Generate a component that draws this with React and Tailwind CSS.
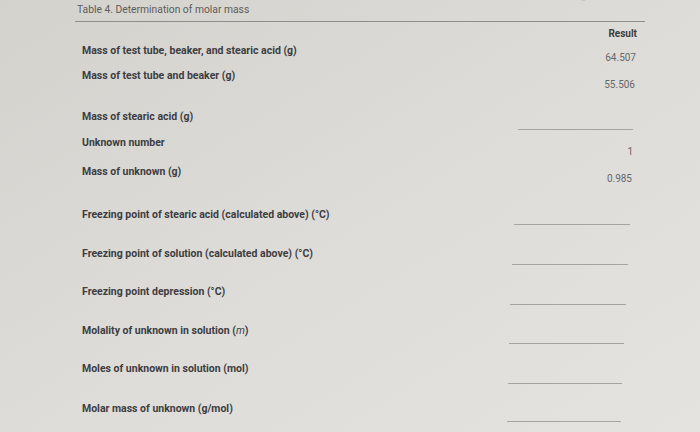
import React from "react";

const rows = [
  {
    label: "Mass of test tube, beaker, and stearic acid (g)",
    row: "h-[26px]",
    lab: "pt-[3px]",
    right: "pt-[10px] pr-[9px]",
    value: "64.507",
  },
  {
    label: "Mass of test tube and beaker (g)",
    row: "h-[40px]",
    lab: "pt-[2px]",
    right: "pt-[11px] pr-[10px]",
    value: "55.506",
  },
  {
    label: "Mass of stearic acid (g)",
    row: "h-[28px]",
    lab: "pt-[3px]",
    right: "mr-[12px] w-[115px] h-[22px]",
  },
  {
    label: "Unknown number",
    row: "h-[28px]",
    lab: "pt-[1px]",
    right: "pt-[10px] pr-[12px]",
    value: "1",
  },
  {
    label: "Mass of unknown (g)",
    row: "h-[42px]",
    lab: "pt-[2px]",
    right: "pt-[9px] pr-[13px]",
    value: "0.985",
  },
  {
    label: "Freezing point of stearic acid (calculated above) (°C)",
    row: "h-[39px]",
    lab: "pt-[3px]",
    right: "mr-[15px] w-[116px] h-[19px]",
  },
  {
    label: "Freezing point of solution (calculated above) (°C)",
    row: "h-[39px]",
    lab: "pt-[3px]",
    right: "mr-[17px] w-[116px] h-[20px]",
  },
  {
    label: "Freezing point depression (°C)",
    row: "h-[39px]",
    lab: "pt-[2px]",
    right: "mr-[19px] w-[116px] h-[21px]",
  },
  {
    label: "Molality of unknown in solution",
    unit: "m",
    row: "h-[38px]",
    lab: "pt-[2px]",
    right: "mr-[21px] w-[115px] h-[21px]",
  },
  {
    label: "Moles of unknown in solution (mol)",
    row: "h-[39px]",
    lab: "pt-[2px]",
    right: "mr-[23px] w-[114px] h-[23px]",
  },
  {
    label: "Molar mass of unknown (g/mol)",
    row: "h-[32px]",
    lab: "pt-[3px]",
    right: "mr-[24px] w-[114px] h-[22px]",
  },
];

export default function App() {
  return (
    <div
      className="w-[700px] h-[432px] overflow-hidden bg-linear-to-br from-[#d4d2cd] via-[#dddcd8] to-[#e4e3df] pl-[75px]"
      style={{ fontFamily: "Roboto, 'Liberation Sans', sans-serif" }}
    >
      <div className="w-[570px]">
        <div className="flex justify-end pr-[2px] h-0 overflow-visible">
          <div className="-mt-[7px] flex items-center gap-[4px] text-[10px] leading-[12px] text-[#6a6a6a]">
            <span>tion</span>
            <span className="w-[9px] h-[9px] rounded-full bg-[#f3f2ef] border border-[#bdbcb8]" />
            <span className="w-[8px] h-[2px] bg-[#9a9995]" />
            <span>List view</span>
          </div>
        </div>
        <div className="h-[22px] pt-[3px] pl-[2px] border-b border-[#8f8e8a] text-[10.3px] leading-[13px] text-[#5c5c5c]">
          Table 4. Determination of molar mass
        </div>
        <div className="flex justify-end h-[20px] pt-[6px] pr-[8px]">
          <span className="text-[10px] leading-[12px] font-bold text-[#3c3c40]">
            Result
          </span>
        </div>
        {rows.map((r) => (
          <div key={r.label} className={"flex justify-between " + r.row}>
            <div
              className={
                "pl-[7px] text-[10.5px] leading-[12px] font-bold text-[#3d3d42] " +
                r.lab
              }
            >
              {r.label}
              {r.unit && (
                <>
                  {" ("}
                  <i className="font-normal">{r.unit}</i>
                  {")"}
                </>
              )}
            </div>
            {r.value ? (
              <div
                className={
                  "text-[10px] leading-[12px] text-[#67676a] " + r.right
                }
              >
                {r.value}
              </div>
            ) : (
              <div className={"border-b border-[#a5a4a0] " + r.right} />
            )}
          </div>
        ))}
      </div>
    </div>
  );
}
